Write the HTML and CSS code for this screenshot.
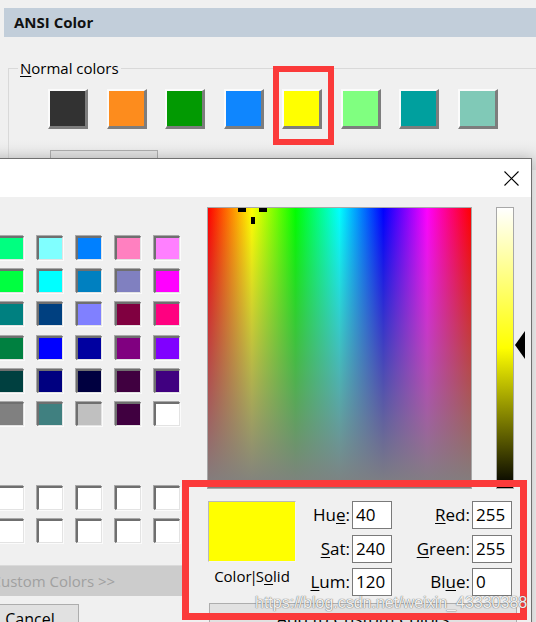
FILE: index.html
```html
<!DOCTYPE html>
<html>
<head>
<meta charset="utf-8">
<title>ANSI Color</title>
<link rel="stylesheet" href="styles.css">
</head>
<body>
<div class="bgwin">
  <div class="header">ANSI Color</div>
  <div class="group">
    <div class="group-title"><u>N</u>ormal colors</div>
    <div class="ansi-row">
      <span class="ansi" style="background:#323232"></span>
      <span class="ansi" style="background:#fd8c1d"></span>
      <span class="ansi" style="background:#029a02"></span>
      <span class="ansi" style="background:#0f86fe"></span>
      <span class="ansi" style="background:#ffff00"></span>
      <span class="ansi" style="background:#80ff80"></span>
      <span class="ansi" style="background:#00a09e"></span>
      <span class="ansi" style="background:#80c9b7"></span>
    </div>
    <div class="reset-btn">Reset</div>
  </div>
</div>

<div class="dialog">
  <div class="titlebar">
    <span class="title">Color</span>
    <span class="close">
      <svg width="15" height="15" viewBox="0 0 15 15"><path d="M0.5 0.5 L14.5 14.5 M14.5 0.5 L0.5 14.5" stroke="#000" stroke-width="1.1" fill="none"/></svg>
    </span>
  </div>
  <div class="dbody">
    <div class="leftcol">
      <div class="lbl basic-lbl"><u>B</u>asic colors:</div>
      <div class="grid">
        <span class="sw" style="background:#ff8080"></span><span class="sw" style="background:#ffff80"></span><span class="sw" style="background:#80ff80"></span><span class="sw" style="background:#00ff80"></span><span class="sw" style="background:#80ffff"></span><span class="sw" style="background:#0080ff"></span><span class="sw" style="background:#ff80c0"></span><span class="sw" style="background:#ff80ff"></span>
        <span class="sw" style="background:#ff0000"></span><span class="sw" style="background:#ffff00"></span><span class="sw" style="background:#80ff00"></span><span class="sw" style="background:#00ff40"></span><span class="sw" style="background:#00ffff"></span><span class="sw" style="background:#0080c0"></span><span class="sw" style="background:#8080c0"></span><span class="sw" style="background:#ff00ff"></span>
        <span class="sw" style="background:#804040"></span><span class="sw" style="background:#ff8040"></span><span class="sw" style="background:#00ff00"></span><span class="sw" style="background:#008080"></span><span class="sw" style="background:#004080"></span><span class="sw" style="background:#8080ff"></span><span class="sw" style="background:#800040"></span><span class="sw" style="background:#ff0080"></span>
        <span class="sw" style="background:#800000"></span><span class="sw" style="background:#ff8000"></span><span class="sw" style="background:#008000"></span><span class="sw" style="background:#008040"></span><span class="sw" style="background:#0000ff"></span><span class="sw" style="background:#0000a0"></span><span class="sw" style="background:#800080"></span><span class="sw" style="background:#8000ff"></span>
        <span class="sw" style="background:#400000"></span><span class="sw" style="background:#804000"></span><span class="sw" style="background:#004000"></span><span class="sw" style="background:#004040"></span><span class="sw" style="background:#000080"></span><span class="sw" style="background:#000040"></span><span class="sw" style="background:#400040"></span><span class="sw" style="background:#400080"></span>
        <span class="sw" style="background:#000000"></span><span class="sw" style="background:#808000"></span><span class="sw" style="background:#808040"></span><span class="sw" style="background:#808080"></span><span class="sw" style="background:#408080"></span><span class="sw" style="background:#c0c0c0"></span><span class="sw" style="background:#400040"></span><span class="sw" style="background:#ffffff"></span>
      </div>
      <div class="lbl custom-lbl"><u>C</u>ustom colors:</div>
      <div class="grid">
        <span class="sw"></span><span class="sw"></span><span class="sw"></span><span class="sw"></span><span class="sw"></span><span class="sw"></span><span class="sw"></span><span class="sw"></span>
        <span class="sw"></span><span class="sw"></span><span class="sw"></span><span class="sw"></span><span class="sw"></span><span class="sw"></span><span class="sw"></span><span class="sw"></span>
      </div>
      <div class="define-btn"><span><u>D</u>efine Custom Colors &gt;&gt;</span></div>
      <div class="btnrow">
        <div class="btn ok-btn">OK</div>
        <div class="btn cancel-btn">Cancel</div>
      </div>
    </div>
    <div class="rightcol">
      <div class="specrow">
        <div class="spectrum">
          <span class="cross cross-l"></span>
          <span class="cross cross-r"></span>
          <span class="cross cross-t"></span>
          <span class="cross cross-b"></span>
        </div>
        <div class="lumbar"></div>
        <div class="arrowcol">
          <svg width="10" height="28" viewBox="0 0 10 28"><polygon points="0,14 10,0 10,28" fill="#000"/></svg>
        </div>
      </div>
      <div class="controls">
        <div class="prevcol">
          <div class="preview"></div>
          <div class="prevlbl">Color<span class="bar">|</span>S<u>o</u>lid</div>
        </div>
        <div class="fields">
          <div class="flbl">Hu<u>e</u>:</div><div class="fval">40</div>
          <div class="flbl"><u>R</u>ed:</div><div class="fval">255</div>
          <div class="flbl"><u>S</u>at:</div><div class="fval">240</div>
          <div class="flbl"><u>G</u>reen:</div><div class="fval">255</div>
          <div class="flbl"><u>L</u>um:</div><div class="fval">120</div>
          <div class="flbl">Bl<u>u</u>e:</div><div class="fval">0</div>
        </div>
      </div>
      <div class="add-btn"><u>A</u>dd to Custom Colors</div>
    </div>
  </div>
</div>

<div class="mark mark-top"></div>
<div class="mark mark-bottom"></div>
<div class="watermark">https://blog.csdn.net/weixin_43330388</div>
</body>
</html>
```

FILE: styles.css
```css
* { box-sizing: border-box; }
html, body { margin: 0; padding: 0; }
body {
  width: 536px;
  height: 622px;
  overflow: hidden;
  position: relative;
  background: #f0f0f0;
  font-family: "Open Sans", "Noto Sans", sans-serif;
  color: #000;
}
u { text-decoration: underline; text-underline-offset: 2px; text-decoration-thickness: 1px; }

/* background window */
.bgwin {
  height: 170px;
  padding: 8px 0 0 4px;
  background: linear-gradient(#f0f0f0 82%, #e2e2e2);
}
.header {
  height: 29px;
  background: #c2ceda;
  padding-left: 10px;
  font-weight: bold;
  font-size: 15px;
  line-height: 29px;
  color: #111;
}
.group {
  margin: 31px 0 0 4px;
  border-top: 1px solid #d9d9d9;
  border-left: 1px solid #d9d9d9;
  height: 140px;
}
.group-title {
  width: fit-content;
  margin: -11px 0 0 9px;
  padding: 0 2px;
  background: #f0f0f0;
  font-size: 15px;
  line-height: 20px;
}
.ansi-row {
  display: flex;
  gap: 18.5px;
  margin: 11px 0 0 39px;
}
.ansi {
  width: 40px;
  height: 40px;
  border-style: solid;
  border-width: 2px 3px 3px 2px;
  border-color: #fbfbfb #7d7d7d #7d7d7d #fbfbfb;
}
.reset-btn {
  width: 108px;
  height: 34px;
  margin: 21px 0 0 41px;
  background: #e1e1e1;
  border: 1px solid #adadad;
  text-align: center;
  font-size: 15px;
  line-height: 30px;
}

/* color dialog (window on top) */
.dialog {
  position: absolute;
  left: -125px;
  top: 158px;
  width: 657px;
  height: 480px;
  background: #f0f0f0;
  border: 1px solid #707070;
  border-bottom: none;
  box-shadow: 0 0 12px rgba(0, 0, 0, 0.22);
}
.titlebar {
  height: 38px;
  background: #fff;
  display: flex;
  justify-content: space-between;
  align-items: center;
}
.title { padding-left: 10px; font-size: 15px; }
.close {
  width: 40px;
  height: 38px;
  display: flex;
  align-items: center;
  justify-content: center;
}
.close svg { display: block; }
.dbody { display: flex; }

.leftcol { width: 306px; flex-shrink: 0; }
.lbl { padding-left: 5px; font-size: 15px; display: flex; align-items: flex-end; }
.basic-lbl { height: 39px; padding-bottom: 4px; }
.custom-lbl { height: 60px; padding-bottom: 6px; }
.grid {
  display: grid;
  grid-template-columns: repeat(8, 26px);
  grid-auto-rows: 24px;
  column-gap: 13px;
  row-gap: 9.2px;
  padding-left: 5px;
}
.sw {
  background: #fff;
  border-style: solid;
  border-width: 2px 1px 1px 2px;
  border-color: #6f6f6f #e3e3e3 #e3e3e3 #6f6f6f;
  box-shadow: 1px 1px 0 #fbfbfb, -1px -1px 0 #a8a8a8;
}
.define-btn {
  margin: 22px 0 0 5px;
  width: 301px;
  height: 31px;
  padding-right: 6px;
  background: #cccccc;
  border-top: 1px solid #dadada;
  display: flex;
  justify-content: center;
  align-items: center;
  white-space: nowrap;
  color: #a0a0a0;
  font-size: 15px;
}
.btnrow { display: flex; gap: 12px; margin: 8px 0 0 5px; }
.btn {
  height: 32px;
  background: #e1e1e1;
  border: 1px solid #adadad;
  text-align: center;
  font-size: 16px;
  line-height: 28px;
}
.ok-btn { width: 88px; }
.cancel-btn { width: 98px; }

.rightcol { padding-top: 10px; display: flex; flex-direction: column; }
.specrow { display: flex; margin-left: 25px; height: 282px; }
.spectrum {
  position: relative;
  overflow: hidden;
  width: 265px;
  height: 282px;
  border: 1px solid #a8a8a8;
  background:
    linear-gradient(to bottom, rgba(128, 128, 128, 0), #808080),
    linear-gradient(to right, #ff0000, #ffff00, #00ff00, #00ffff, #0000ff, #ff00ff, #ff0000);
}
.cross { position: absolute; background: #000; }
.cross-l { left: 30px; top: 0; width: 8px; height: 4px; }
.cross-r { left: 51px; top: 0; width: 8px; height: 4px; }
.cross-t { left: 43px; top: -11px; width: 4px; height: 7px; }
.cross-b { left: 43px; top: 9px; width: 4px; height: 7px; }
.lumbar {
  margin-left: 24px;
  width: 18px;
  height: 282px;
  border: 1px solid #a8a8a8;
  background: linear-gradient(#ffffff, #ffff00 50%, #000000);
}
.arrowcol { margin-left: 1px; padding-top: 124px; }
.arrowcol svg { display: block; }

.controls { display: flex; margin: 12px 0 0 26px; }
.prevcol { width: 88px; }
.preview {
  height: 61px;
  background: #ffff00;
  border: 1px solid;
  border-color: #b9b9b9 #f4f4f4 #f4f4f4 #b9b9b9;
}
.prevlbl {
  margin-top: 4px;
  text-align: center;
  font-size: 15px;
  line-height: 20px;
  white-space: nowrap;
}
.bar { margin: 0 -2px; }
.fields {
  display: grid;
  grid-template-columns: 54px 40px 76px 40px;
  grid-auto-rows: 28px;
  column-gap: 2px;
  row-gap: 5.5px;
}
.flbl {
  text-align: right;
  font-size: 17px;
  line-height: 28px;
  white-space: nowrap;
}
.fval {
  background: #fff;
  border: 1px solid #7a7a7a;
  padding-left: 3px;
  font-size: 17px;
  line-height: 25px;
}
.add-btn {
  margin: 7px 0 0 27px;
  width: 308px;
  height: 40px;
  background: #e1e1e1;
  border: 1px solid #adadad;
  text-align: center;
  font-size: 17px;
  line-height: 24px;
  padding-top: 3px;
}

/* annotations over the screenshot */
.mark { position: absolute; border-style: solid; border-color: #fb3a3a; }
.mark-top { left: 273px; top: 66px; width: 61px; height: 79px; border-width: 6px; }
.mark-bottom { left: 182px; top: 480px; width: 345px; height: 140px; border-width: 7px; }
.watermark {
  position: absolute;
  left: 255px;
  top: 593px;
  font-family: "Liberation Sans", Arial, sans-serif;
  font-size: 16px;
  line-height: 20px;
  color: rgba(255, 255, 255, 0.92);
  text-shadow: 0 0 1px rgba(90, 90, 90, 0.8), 0 0 1px rgba(90, 90, 90, 0.8);
  white-space: nowrap;
}
```
